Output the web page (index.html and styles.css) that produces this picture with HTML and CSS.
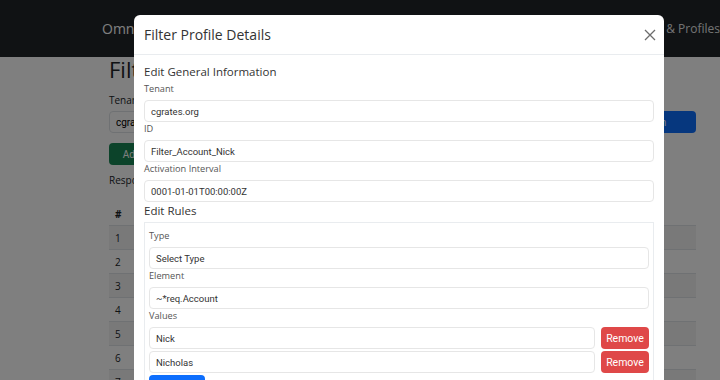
FILE: index.html
```html
<!DOCTYPE html>
<html lang="en">
<head>
    <meta charset="UTF-8">
    <meta name="viewport" content="width=device-width, initial-scale=1.0">
    <title>Filters</title>
    <link rel="stylesheet" href="styles.css">
</head>
<body>
    <nav class="navbar">
        <span class="brand">Omnitest</span>
        <ul class="nav-links">
            <li>Filters</li>
            <li>Resources</li>
            <li>Rating Plans &amp; Profiles</li>
        </ul>
    </nav>

    <main class="page">
        <h1 class="page-title">Filters</h1>
        <label class="page-label">Tenant</label>
        <div class="search-row">
            <input class="page-input" type="text" value="cgrates.org">
            <button class="btn btn-primary">Search</button>
        </div>
        <button class="btn btn-success">Add Filter</button>
        <p class="response">Response</p>
        <table class="table">
            <thead>
                <tr><th>#</th><th>ID</th><th>Tenant</th><th>Actions</th></tr>
            </thead>
            <tbody>
                <tr><td>1</td><td>Filter_Account_Nick</td><td>cgrates.org</td><td></td></tr>
                <tr><td>2</td><td>FLTR_1</td><td>cgrates.org</td><td></td></tr>
                <tr><td>3</td><td>FLTR_2</td><td>cgrates.org</td><td></td></tr>
                <tr><td>4</td><td>FLTR_3</td><td>cgrates.org</td><td></td></tr>
                <tr><td>5</td><td>FLTR_4</td><td>cgrates.org</td><td></td></tr>
                <tr><td>6</td><td>FLTR_5</td><td>cgrates.org</td><td></td></tr>
                <tr><td>7</td><td>FLTR_6</td><td>cgrates.org</td><td></td></tr>
            </tbody>
        </table>
    </main>

    <div class="backdrop"></div>

    <div class="modal">
        <div class="modal-header">
            <span class="modal-title">Filter Profile Details</span>
            <button class="close-btn" aria-label="Close">
                <svg width="12" height="12" viewBox="0 0 12 12">
                    <path d="M1 1L11 11M11 1L1 11" stroke="#6c6c6c" stroke-width="1.3" fill="none"/>
                </svg>
            </button>
        </div>
        <div class="modal-body">
            <h5 class="section-title">Edit General Information</h5>
            <label class="form-label">Tenant</label>
            <input class="form-input" type="text" value="cgrates.org">
            <label class="form-label">ID</label>
            <input class="form-input" type="text" value="Filter_Account_Nick">
            <label class="form-label">Activation Interval</label>
            <input class="form-input" type="text" value="0001-01-01T00:00:00Z">

            <h5 class="section-title rules-title">Edit Rules</h5>
            <div class="rule-box">
                <label class="form-label">Type</label>
                <div class="form-input select">Select Type</div>
                <label class="form-label">Element</label>
                <input class="form-input" type="text" value="~*req.Account">
                <label class="form-label">Values</label>
                <div class="value-row">
                    <input class="form-input" type="text" value="Nick">
                    <button class="btn btn-danger">Remove</button>
                </div>
                <div class="value-row">
                    <input class="form-input" type="text" value="Nicholas">
                    <button class="btn btn-danger">Remove</button>
                </div>
                <button class="btn btn-primary add-value">Add Value</button>
            </div>
        </div>
    </div>
</body>
</html>
```

FILE: styles.css
```css
body {
    margin: 0;
    font-family: 'Open Sans', sans-serif;
    background: #fff;
    color: #212529;
    overflow: hidden;
    height: 380px;
}

.navbar {
    display: flex;
    align-items: center;
    height: 57px;
    padding: 0 0 0 102px;
    background: #212529;
    overflow: hidden;
}

.brand {
    font-size: 14px;
    color: #fff;
    white-space: nowrap;
}

.nav-links {
    display: flex;
    gap: 14px;
    margin: 0 0 0 auto;
    padding: 0;
    list-style: none;
    font-size: 12px;
    color: rgba(255, 255, 255, 0.9);
    white-space: nowrap;
}

.page {
    padding: 0 24px 0 109px;
}

.page-title {
    margin: 0;
    font-size: 22px;
    font-weight: 500;
    line-height: 24px;
}

.page-label {
    display: block;
    margin-top: 12px;
    font-size: 10px;
    line-height: 14px;
}

.search-row {
    display: flex;
    gap: 8px;
    margin-top: 4px;
}

.page-input {
    flex-grow: 1;
    height: 22px;
    box-sizing: border-box;
    border: 1px solid #dee2e6;
    border-radius: 4px;
    padding: 0 6px;
    font-family: Roboto, sans-serif;
    font-size: 10px;
}

.btn {
    height: 22px;
    border: none;
    border-radius: 4px;
    padding: 0 8px;
    font-family: Roboto, sans-serif;
    font-size: 10px;
    color: #fff;
    cursor: pointer;
}

.btn-primary {
    background: #0d6efd;
    width: 90px;
}

.btn-success {
    background: #198754;
    margin-top: 10px;
    width: 70px;
}

.btn-danger {
    flex-shrink: 0;
    background: #df4848;
    width: 48px;
    padding: 0;
    font-size: 10.5px;
}

.response {
    margin: 8px 0 0;
    font-size: 10px;
    line-height: 14px;
}

.table {
    width: 100%;
    margin-top: 15px;
    border-collapse: collapse;
    font-size: 10px;
}

.table th,
.table td {
    height: 23px;
    padding: 0 6px;
    text-align: left;
    border-bottom: 1px solid #dee2e6;
}

.table tbody tr:nth-child(odd) {
    background: rgba(0, 0, 0, 0.05);
}

.backdrop {
    position: fixed;
    inset: 0;
    background: rgba(0, 0, 0, 0.5);
}

.modal {
    position: absolute;
    top: 15px;
    left: 134px;
    width: 530px;
    height: 420px;
    background: #fff;
    border-radius: 6px;
}

.modal-header {
    display: flex;
    justify-content: space-between;
    align-items: center;
    height: 39px;
    padding: 0 8px 0 10px;
    border-bottom: 1px solid #e9ecef;
}

.modal-title {
    font-size: 14px;
    color: #333;
}

.close-btn {
    display: flex;
    background: none;
    border: none;
    padding: 0;
    cursor: pointer;
}

.modal-body {
    padding: 8px 10px 0;
}

.section-title {
    margin: 0 0 1px;
    font-size: 11.5px;
    font-weight: 500;
    line-height: 18px;
    color: #333;
}

.rules-title {
    margin-bottom: 2px;
}

.form-label {
    display: block;
    margin-bottom: 4px;
    font-size: 9.2px;
    line-height: 14px;
    color: #555;
}

.form-input {
    display: block;
    width: 100%;
    height: 22px;
    box-sizing: border-box;
    border: 1px solid #e6e6e6;
    border-radius: 4px;
    padding: 0 6px;
    font-family: Roboto, sans-serif;
    font-size: 9.5px;
    color: #333;
    background: #fff;
}

.select {
    display: flex;
    align-items: center;
}

.rule-box {
    border: 1px solid #e9ecef;
    padding: 6px 4px 4px;
}

.value-row {
    display: flex;
    gap: 6px;
    margin-bottom: 2px;
}

.value-row .form-input {
    flex-grow: 1;
}

.add-value {
    display: block;
    width: 56px;
    padding: 0;
}
```
